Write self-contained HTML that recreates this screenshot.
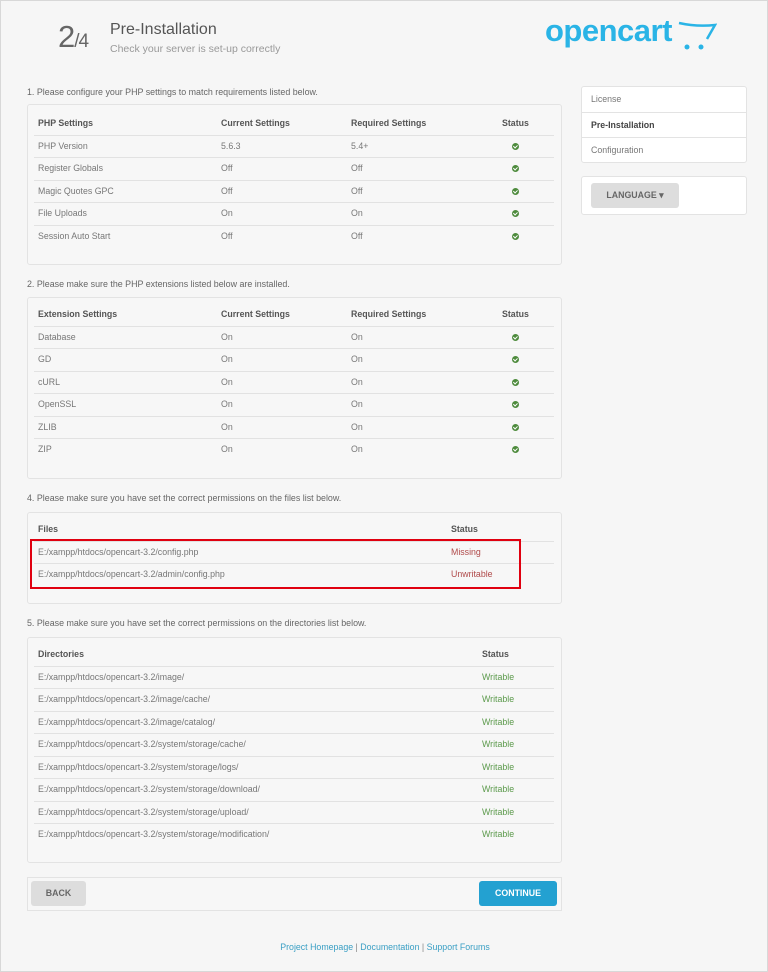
<!DOCTYPE html>
<html><head><meta charset="utf-8"><style>
*{margin:0;padding:0;box-sizing:border-box}
body{width:768px;height:972px;background:#f6f6f6;font-family:"Liberation Sans",sans-serif;color:#777;font-size:8.8px;position:relative;overflow:hidden;border:1px solid #d8d8d8}
.a{position:absolute}
.panel{position:absolute;border:1px solid #e3e3e3;border-radius:3px;background:#f7f7f7}
.lbl{position:absolute;left:26px;font-size:8.9px;color:#666}
.tbl{position:absolute;left:33px;width:520px}
.r{height:22.5px;line-height:20.5px;border-top:1px solid #e2e2e2;position:relative;white-space:nowrap}
.r.h{border-top:none;font-weight:bold;color:#555;line-height:22px}
.r span{position:absolute;top:0}
.ok{display:inline-block;width:7px;height:7px;border-radius:50%;background:#4e8b3d;position:relative;vertical-align:middle}
.ok:after{content:"";position:absolute;left:2.2px;top:1.2px;width:1.6px;height:3px;border:solid #fff;border-width:0 1px 1px 0;transform:rotate(45deg)}
.red{color:#b04a4a}.grn{color:#5c9a4c}
a{color:#3a9fc4;text-decoration:none}
</style></head><body>
<div class="a" style="left:57px;top:18px;font-size:31px;color:#666;letter-spacing:-1px">2<span style="font-size:19px">/4</span></div>
<div class="a" style="left:109px;top:20px;font-size:16px;color:#555">Pre-Installation</div>
<div class="a" style="left:109px;top:42px;font-size:10.5px;color:#999">Check your server is set-up correctly</div>
<div class="a" style="left:544px;top:12px;font-size:31px;font-weight:bold;color:#2ab4e6;letter-spacing:-0.5px">opencart</div>
<svg class="a" style="left:676px;top:20px" width="40" height="30"><path d="M2 2 Q20 6 38 4 L30 18" stroke="#2ab4e6" stroke-width="2.5" fill="none"/><circle cx="10" cy="26" r="2.5" fill="#2ab4e6"/><circle cx="24" cy="26" r="2.5" fill="#2ab4e6"/></svg>

<div class="panel" style="left:580px;top:85px;width:166px;height:77px;background:#fff">
<div style="height:25.5px;line-height:25.5px;padding-left:9px;border-bottom:1px solid #e3e3e3">License</div>
<div style="height:25.5px;line-height:25.5px;padding-left:9px;border-bottom:1px solid #e3e3e3;font-weight:bold;color:#444">Pre-Installation</div>
<div style="height:25px;line-height:25px;padding-left:9px">Configuration</div></div>
<div class="panel" style="left:580px;top:175px;width:166px;height:39px;background:#fff"><div class="a" style="left:9px;top:6px;width:88px;height:25px;background:#ddd;border-radius:3px;line-height:25px;text-align:center;font-weight:bold;color:#666">LANGUAGE ▾</div></div>

<div class="lbl" style="top:86px">1. Please configure your PHP settings to match requirements listed below.</div>
<div class="panel" style="left:26px;top:103px;width:535px;height:161px"></div>
<div class="tbl" style="top:111px">
<div class="r h"><span style="left:4px">PHP Settings</span><span style="left:187px">Current Settings</span><span style="left:317px">Required Settings</span><span style="left:468px">Status</span></div>
<div class="r"><span style="left:4px">PHP Version</span><span style="left:187px">5.6.3</span><span style="left:317px">5.4+</span><span style="left:478px"><i class="ok"></i></span></div>
<div class="r"><span style="left:4px">Register Globals</span><span style="left:187px">Off</span><span style="left:317px">Off</span><span style="left:478px"><i class="ok"></i></span></div>
<div class="r"><span style="left:4px">Magic Quotes GPC</span><span style="left:187px">Off</span><span style="left:317px">Off</span><span style="left:478px"><i class="ok"></i></span></div>
<div class="r"><span style="left:4px">File Uploads</span><span style="left:187px">On</span><span style="left:317px">On</span><span style="left:478px"><i class="ok"></i></span></div>
<div class="r"><span style="left:4px">Session Auto Start</span><span style="left:187px">Off</span><span style="left:317px">Off</span><span style="left:478px"><i class="ok"></i></span></div>
</div>

<div class="lbl" style="top:278px">2. Please make sure the PHP extensions listed below are installed.</div>
<div class="panel" style="left:26px;top:296px;width:535px;height:182px"></div>
<div class="tbl" style="top:302px">
<div class="r h"><span style="left:4px">Extension Settings</span><span style="left:187px">Current Settings</span><span style="left:317px">Required Settings</span><span style="left:468px">Status</span></div>
<div class="r"><span style="left:4px">Database</span><span style="left:187px">On</span><span style="left:317px">On</span><span style="left:478px"><i class="ok"></i></span></div>
<div class="r"><span style="left:4px">GD</span><span style="left:187px">On</span><span style="left:317px">On</span><span style="left:478px"><i class="ok"></i></span></div>
<div class="r"><span style="left:4px">cURL</span><span style="left:187px">On</span><span style="left:317px">On</span><span style="left:478px"><i class="ok"></i></span></div>
<div class="r"><span style="left:4px">OpenSSL</span><span style="left:187px">On</span><span style="left:317px">On</span><span style="left:478px"><i class="ok"></i></span></div>
<div class="r"><span style="left:4px">ZLIB</span><span style="left:187px">On</span><span style="left:317px">On</span><span style="left:478px"><i class="ok"></i></span></div>
<div class="r"><span style="left:4px">ZIP</span><span style="left:187px">On</span><span style="left:317px">On</span><span style="left:478px"><i class="ok"></i></span></div>
</div>

<div class="lbl" style="top:492px">4. Please make sure you have set the correct permissions on the files list below.</div>
<div class="panel" style="left:26px;top:511px;width:535px;height:92px"></div>
<div class="tbl" style="top:517px">
<div class="r h"><span style="left:4px">Files</span><span style="left:417px">Status</span></div>
<div class="r"><span style="left:4px">E:/xampp/htdocs/opencart-3.2/config.php</span><span style="left:417px" class="red">Missing</span></div>
<div class="r"><span style="left:4px">E:/xampp/htdocs/opencart-3.2/admin/config.php</span><span style="left:417px" class="red">Unwritable</span></div>
</div>
<div class="a" style="left:29px;top:538px;width:491px;height:50px;border:2.5px solid #e00010"></div>

<div class="lbl" style="top:617px">5. Please make sure you have set the correct permissions on the directories list below.</div>
<div class="panel" style="left:26px;top:636px;width:535px;height:226px"></div>
<div class="tbl" style="top:642px">
<div class="r h"><span style="left:4px">Directories</span><span style="left:448px">Status</span></div>
<div class="r"><span style="left:4px">E:/xampp/htdocs/opencart-3.2/image/</span><span style="left:448px" class="grn">Writable</span></div>
<div class="r"><span style="left:4px">E:/xampp/htdocs/opencart-3.2/image/cache/</span><span style="left:448px" class="grn">Writable</span></div>
<div class="r"><span style="left:4px">E:/xampp/htdocs/opencart-3.2/image/catalog/</span><span style="left:448px" class="grn">Writable</span></div>
<div class="r"><span style="left:4px">E:/xampp/htdocs/opencart-3.2/system/storage/cache/</span><span style="left:448px" class="grn">Writable</span></div>
<div class="r"><span style="left:4px">E:/xampp/htdocs/opencart-3.2/system/storage/logs/</span><span style="left:448px" class="grn">Writable</span></div>
<div class="r"><span style="left:4px">E:/xampp/htdocs/opencart-3.2/system/storage/download/</span><span style="left:448px" class="grn">Writable</span></div>
<div class="r"><span style="left:4px">E:/xampp/htdocs/opencart-3.2/system/storage/upload/</span><span style="left:448px" class="grn">Writable</span></div>
<div class="r"><span style="left:4px">E:/xampp/htdocs/opencart-3.2/system/storage/modification/</span><span style="left:448px" class="grn">Writable</span></div>
</div>

<div class="panel" style="left:26px;top:876px;width:535px;height:34px;border-radius:0"></div>
<div class="a" style="left:30px;top:880px;width:55px;height:25px;background:#ddd;border-radius:3px;line-height:25px;text-align:center;font-weight:bold;color:#666">BACK</div>
<div class="a" style="left:478px;top:880px;width:78px;height:25px;background:#23a1d1;border-radius:3px;line-height:25px;text-align:center;font-weight:bold;color:#fff">CONTINUE</div>

<div class="a" style="left:0;width:768px;top:941px;text-align:center;font-size:8.8px;color:#888"><a>Project Homepage</a> | <a>Documentation</a> | <a>Support Forums</a></div>
</body></html>
